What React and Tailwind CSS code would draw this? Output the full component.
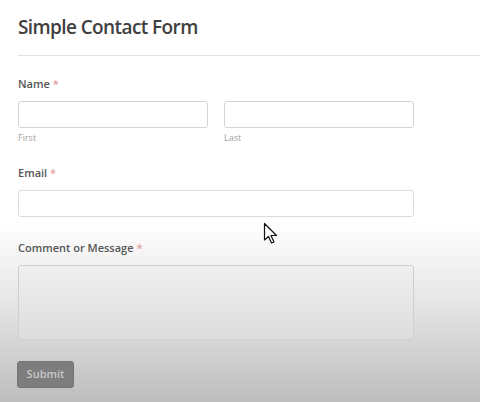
export default function App() {
  return (
    <div
      className="relative w-[480px] h-[402px] overflow-hidden bg-[linear-gradient(to_bottom,#ffffff_0%,#ffffff_55%,#e6e6e6_75%,#bdbdbd_100%)]"
      style={{ fontFamily: '"Open Sans", "Noto Sans", sans-serif' }}
    >
      <div className="pl-[18px] pt-[13px]">
        <h1 className="text-[19px] leading-[28px] font-semibold tracking-[-0.6px] text-[#404040]">Simple Contact Form</h1>
      </div>
      <div className="ml-[18px] mt-[14px] h-px bg-[#e2e2e2]" />
      <div className="pl-[18px] w-[414px] pt-[20px]">
        <div className="text-[11px] leading-[16px] font-semibold text-[#555]">
          Name <span className="text-[#e3a0a0]">*</span>
        </div>
        <div className="mt-[9px] flex gap-[16px]">
          <div className="flex-1">
            <div className="h-[27px] rounded-[3px] border border-[#d4d4d4] bg-white" />
            <div className="mt-[3px] text-[9px] leading-[14px] text-[#a0a0a0]">First</div>
          </div>
          <div className="flex-1">
            <div className="h-[27px] rounded-[3px] border border-[#d4d4d4] bg-white" />
            <div className="mt-[3px] text-[9px] leading-[14px] text-[#a0a0a0]">Last</div>
          </div>
        </div>
        <div className="mt-[20px] text-[11px] leading-[16px] font-semibold text-[#555]">
          Email <span className="text-[#e3a0a0]">*</span>
        </div>
        <div className="mt-[9px] h-[27px] rounded-[3px] border border-[#dcdcdc] bg-white" />
        <div className="mt-[23px] text-[11px] leading-[16px] font-semibold text-[#555]">
          Comment or Message <span className="text-[#e3a0a0]">*</span>
        </div>
        <div className="mt-[9px] h-[75px] rounded-[3px] border border-[#cfcfcf] bg-[linear-gradient(to_bottom,#f0f0f0,#dcdcdc)]" />
        <button className="mt-[21px] ml-[-1px] h-[27px] w-[57px] rounded-[3px] bg-[#7d7d7d] border border-[#757575] text-[11px] font-semibold text-[#c9c9c9]">
          Submit
        </button>
      </div>
      <svg className="absolute left-[263px] top-[222px]" width="16" height="23" viewBox="0 0 16 23">
        <path d="M1.5 1.5 L1.5 18 L5.5 14.5 L8.5 21 L11 20 L8 13.5 L13.5 13.5 Z" fill="#fff" stroke="#111" strokeWidth="1.2" strokeLinejoin="round" />
      </svg>
    </div>
  );
}
